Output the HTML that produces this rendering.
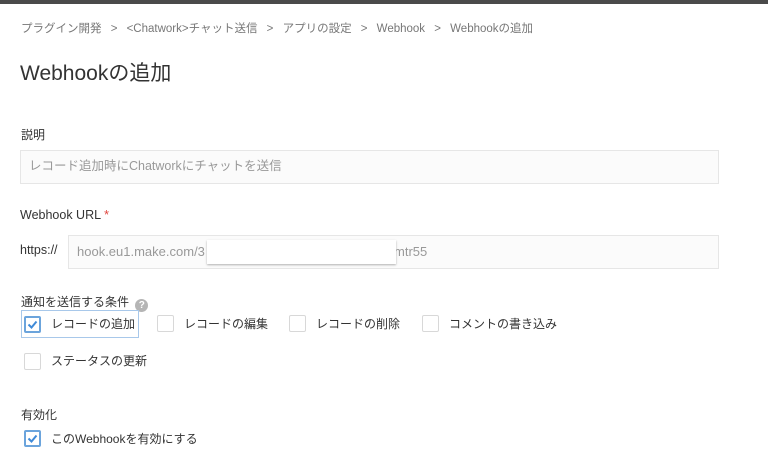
<!DOCTYPE html>
<html><head><meta charset="utf-8"><style>
*{margin:0;padding:0;box-sizing:border-box}
body{width:768px;height:474px;background:#fff;position:relative;overflow:hidden;font-family:"Liberation Sans","Noto Sans CJK JP",sans-serif;color:#333}
.a{position:absolute;white-space:nowrap}
.bar{left:0;top:0;width:768px;height:4px;background:#4a4a4a}
.crumb{left:21px;top:20px;font-size:11.5px;color:#777;word-spacing:1.4px}
.title{left:20px;top:57px;font-size:21px;color:#333}
.lbl{font-size:12px;color:#333}
.inp{background:#fbfbfb;border:1px solid #e6e6e6;font-size:12.5px;color:#999;padding-left:8px;line-height:31px}
.cb{width:17px;height:17px;border:1px solid #d8d8d8;background:#fff;border-radius:2px}
.cb.on{border:2px solid #6ba4dc}
.cb.on svg{position:absolute;left:1px;top:1px}
.t{font-size:12px;color:#333}
</style></head><body>
<div class="a bar"></div>
<div class="a crumb">プラグイン開発 &nbsp;&gt;&nbsp; &lt;Chatwork&gt;チャット送信 &nbsp;&gt;&nbsp; アプリの設定 &nbsp;&gt;&nbsp; Webhook &nbsp;&gt;&nbsp; Webhookの追加</div>
<div class="a title">Webhookの追加</div>
<div class="a lbl" style="left:21px;top:126px">説明</div>
<div class="a inp" style="left:20px;top:150px;width:699px;height:34px">レコード追加時にChatworkにチャットを送信</div>
<div class="a lbl" style="left:20px;top:208px;font-size:12.5px">Webhook URL <span style="color:#e0443c">*</span></div>
<div class="a t" style="left:20px;top:243px;font-size:12.5px">https://</div>
<div class="a inp" style="left:68px;top:235px;width:651px;height:34px;font-size:13px">hook.eu1.make.com/3<span style="position:absolute;left:325px">mtr55</span></div>
<div class="a" style="left:207px;top:240px;width:189px;height:24px;background:#fff;box-shadow:0 1px 2px rgba(0,0,0,.3)"></div>
<div class="a lbl" style="left:21px;top:293px">通知を送信する条件 <span style="display:inline-block;width:13px;height:13px;border-radius:50%;background:#b5b5b5;color:#fff;font-size:10px;line-height:13px;text-align:center;vertical-align:-2px;font-weight:bold;margin-left:3px">?</span></div>
<div class="a" style="left:21px;top:310px;width:118px;height:28px;border:1px solid #a8c8ea"></div>
<div class="a cb on" style="left:24px;top:316px"><svg width="11" height="11" viewBox="0 0 11 11"><path d="M1.5 5.5l3 3 5-6" fill="none" stroke="#3f8ad8" stroke-width="2"/></svg></div>
<div class="a t" style="left:51px;top:315px">レコードの追加</div>
<div class="a cb" style="left:157px;top:315px"></div>
<div class="a t" style="left:184px;top:315px">レコードの編集</div>
<div class="a cb" style="left:289px;top:315px"></div>
<div class="a t" style="left:316px;top:315px">レコードの削除</div>
<div class="a cb" style="left:422px;top:315px"></div>
<div class="a t" style="left:449px;top:315px">コメントの書き込み</div>
<div class="a cb" style="left:24px;top:353px"></div>
<div class="a t" style="left:51px;top:352px">ステータスの更新</div>
<div class="a lbl" style="left:21px;top:406px">有効化</div>
<div class="a cb on" style="left:24px;top:430px"><svg width="11" height="11" viewBox="0 0 11 11"><path d="M1.5 5.5l3 3 5-6" fill="none" stroke="#3f8ad8" stroke-width="2"/></svg></div>
<div class="a t" style="left:51px;top:430px">このWebhookを有効にする</div>
</body></html>
